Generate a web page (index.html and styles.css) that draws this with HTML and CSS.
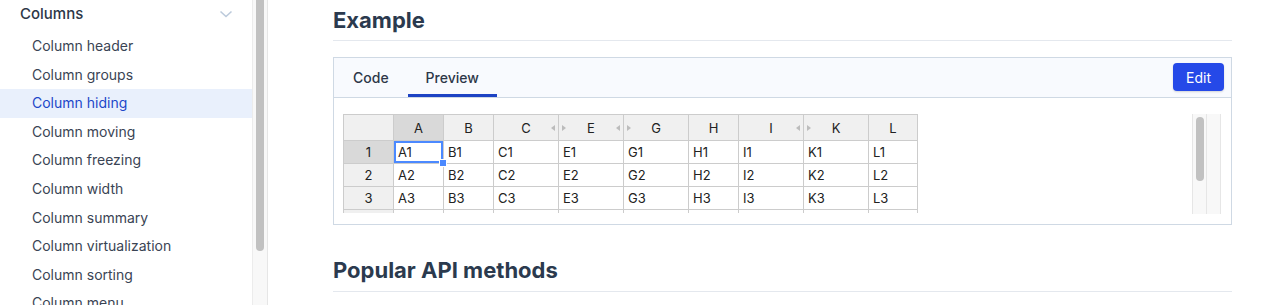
FILE: index.html
```html
<!DOCTYPE html>
<html lang="en">
<head>
    <meta charset="UTF-8">
    <title>Column hiding</title>
    <link rel="stylesheet" href="styles.css">
</head>
<body>
    <div class="layout">
        <aside class="sidebar">
            <div class="nav-group">
                <span>Columns</span>
                <svg class="chevron" width="14" height="8" viewBox="0 0 14 8"><path d="M1.5 1.5 L7 6.5 L12.5 1.5" fill="none" stroke="#bccadb" stroke-width="1.6"/></svg>
            </div>
            <ul class="nav-list">
                <li>Column header</li>
                <li>Column groups</li>
                <li class="active">Column hiding</li>
                <li>Column moving</li>
                <li>Column freezing</li>
                <li>Column width</li>
                <li>Column summary</li>
                <li>Column virtualization</li>
                <li>Column sorting</li>
                <li>Column menu</li>
            </ul>
        </aside>
        <div class="side-scroll"><div class="side-thumb"></div></div>

        <main class="content">
            <h2 class="section-title">Example</h2>

            <div class="example-box">
                <div class="tabs">
                    <div class="tab">Code</div>
                    <div class="tab active">Preview</div>
                    <button class="edit-btn">Edit</button>
                </div>
                <div class="preview">
                    <div class="grid-wrap">
                        <table class="grid">
                            <colgroup>
                                <col style="width:50px"><col style="width:50px"><col style="width:50px">
                                <col style="width:65px"><col style="width:65px"><col style="width:65px">
                                <col style="width:50px"><col style="width:65px"><col style="width:65px">
                                <col style="width:49px">
                            </colgroup>
                            <thead>
                                <tr>
                                    <th class="corner"></th>
                                    <th class="hl">A</th>
                                    <th>B</th>
                                    <th class="hid-after">C</th>
                                    <th class="hid-before hid-after">E</th>
                                    <th class="hid-before">G</th>
                                    <th>H</th>
                                    <th class="hid-after">I</th>
                                    <th class="hid-before">K</th>
                                    <th>L</th>
                                </tr>
                            </thead>
                            <tbody>
                                <tr><th class="hl">1</th><td class="current">A1</td><td>B1</td><td>C1</td><td>E1</td><td>G1</td><td>H1</td><td>I1</td><td>K1</td><td>L1</td></tr>
                                <tr><th>2</th><td>A2</td><td>B2</td><td>C2</td><td>E2</td><td>G2</td><td>H2</td><td>I2</td><td>K2</td><td>L2</td></tr>
                                <tr><th>3</th><td>A3</td><td>B3</td><td>C3</td><td>E3</td><td>G3</td><td>H3</td><td>I3</td><td>K3</td><td>L3</td></tr>
                                <tr><th></th><td></td><td></td><td></td><td></td><td></td><td></td><td></td><td></td><td></td></tr>
                            </tbody>
                        </table>
                    </div>
                    <div class="grid-scroll">
                        <div class="grid-track"><div class="grid-thumb"></div></div>
                        <div class="grid-track"></div>
                    </div>
                </div>
            </div>

            <h2 class="section-title api">Popular API methods</h2>
        </main>
    </div>
</body>
</html>
```

FILE: styles.css
```css
body {
    margin: 0;
    font-family: Inter, "Noto Sans", sans-serif;
    color: #2d3748;
    background: #fff;
    overflow: hidden;
}

.layout {
    display: flex;
    height: 305px;
}

/* sidebar */
.sidebar {
    width: 252px;
    flex: 0 0 252px;
    border-right: 1px solid #ececec;
}

.nav-group {
    display: flex;
    align-items: center;
    justify-content: space-between;
    height: 34px;
    margin-top: -4px;
    padding: 0 19px 0 20px;
    font-size: 15px;
    font-weight: 500;
    color: #2d3748;
}

.chevron {
    margin-top: 2px;
}

.nav-list {
    list-style: none;
    margin: 0;
    padding: 2px 0 0;
}

.nav-list li {
    height: 28.6px;
    line-height: 28.6px;
    padding-left: 32px;
    font-size: 14px;
    color: #3a4454;
}

.nav-list li.active {
    background: #e9f0fc;
    color: #1d47c9;
}

.side-scroll {
    flex: 0 0 14px;
    background: #f8f8f8;
    border-right: 1px solid #e6e6e6;
    padding: 0 3px 0 3px;
    box-sizing: border-box;
}

.side-thumb {
    width: 8px;
    height: 251px;
    background: #c1c1c1;
    border-radius: 0 0 4px 4px;
}

/* main */
.content {
    flex: 1;
    padding: 0 35px 0 65px;
}

.section-title {
    margin: 6px 0 0;
    padding-bottom: 6px;
    line-height: 28px;
    font-size: 22px;
    font-weight: 700;
    color: #2b3a4e;
    border-bottom: 1px solid #e4e8ee;
}

.section-title.api {
    margin-top: 31px;
    padding-bottom: 7px;
}

.example-box {
    margin-top: 16px;
    border: 1px solid #cfd9e4;
}

.tabs {
    display: flex;
    align-items: stretch;
    height: 39px;
    background: #f8fafe;
    border-bottom: 1px solid #cfd9e4;
}

.tab {
    padding: 0 19px;
    line-height: 39px;
    font-size: 14px;
    font-weight: 500;
    color: #2d3748;
    box-sizing: border-box;
}

.tab.active {
    padding: 0 18px;
    height: 39px;
    border-bottom: 3px solid #1d43c4;
}

.edit-btn {
    margin: 5px 7px 0 auto;
    height: 28px;
    padding: 0 13px;
    border: none;
    border-radius: 4px;
    background: #2549e8;
    color: #fff;
    font-family: inherit;
    font-size: 14px;
    box-shadow: 0 1px 2px rgba(0, 0, 0, 0.15);
}

.preview {
    display: flex;
    justify-content: space-between;
    padding: 16px 10px 10px 9px;
}

.grid-wrap {
    height: 99px;
    overflow: hidden;
}

/* data grid */
.grid {
    border-collapse: collapse;
    table-layout: fixed;
    width: 574px;
    font-size: 13px;
    color: #222;
}

.grid th,
.grid td {
    border: 1px solid #ccc;
    height: 23px;
    padding: 0 4px;
    white-space: nowrap;
    overflow: hidden;
    box-sizing: border-box;
}

.grid thead th {
    position: relative;
    height: 26px;
    background: #f0f0f0;
    font-weight: 400;
    text-align: center;
    overflow: visible;
}

.grid tbody th {
    background: #f0f0f0;
    font-weight: 400;
    text-align: center;
}

.grid th.hl {
    background: #d9d9d9;
}

.grid td.current {
    position: relative;
    box-shadow: inset 0 0 0 2px #4b89ff;
    overflow: visible;
}

.grid td.current::after {
    content: "";
    position: absolute;
    right: -4px;
    bottom: -4px;
    width: 6px;
    height: 6px;
    background: #4b89ff;
    border: 1px solid #fff;
    z-index: 2;
}

.grid th.hid-after::after,
.grid th.hid-before::before {
    content: "";
    position: absolute;
    top: 50%;
    margin-top: -3px;
    width: 0;
    height: 0;
    border-top: 3px solid transparent;
    border-bottom: 3px solid transparent;
}

.grid th.hid-after::after {
    right: 3px;
    border-right: 4px solid #bcbcbc;
}

.grid th.hid-before::before {
    left: 3px;
    border-left: 4px solid #bcbcbc;
}

.grid-scroll {
    display: flex;
    height: 100px;
}

.grid-track {
    width: 14px;
    background: #f8f8f8;
    border-left: 1px solid #e6e6e6;
    padding: 3px 3px 0;
    box-sizing: border-box;
}

.grid-track + .grid-track {
    border-right: 1px solid #e6e6e6;
    width: 15px;
}

.grid-thumb {
    width: 8px;
    height: 64px;
    border-radius: 4px;
    background: #c1c1c1;
}
```
